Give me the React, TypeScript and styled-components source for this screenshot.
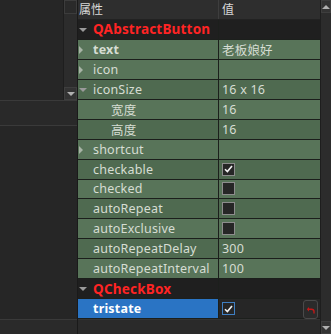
import styled, { createGlobalStyle } from 'styled-components';

const GlobalStyle = createGlobalStyle`
  html, body { margin: 0; padding: 0; background: #262626; }
  body { font-family: 'Noto Sans', 'Noto Sans CJK SC', sans-serif; font-size: 12px; }
`;

const Window = styled.div`
  width: 331px;
  height: 334px;
  display: flex;
  overflow: hidden;
  background: #262626;
`;

const LeftPane = styled.div`
  width: 77px;
  display: flex;
  flex-direction: column;
  border-right: 1px solid #1a1a1a;
`;

const TopList = styled.div`
  height: 100px;
  display: flex;
  border-bottom: 1px solid #3a3a3a;
`;

const ListBody = styled.div`
  flex: 1;
  background: #262626;
`;

const VScroll = styled.div<{ $w?: number }>`
  width: ${p => p.$w ?? 13}px;
  display: flex;
  flex-direction: column;
  justify-content: space-between;
  background: #2c2c2c;
  border-left: 1px solid #1e1e1e;
`;

const Thumb = styled.div`
  height: 14px;
  border: 1px solid #3c3c3c;
  background: #2a2a2a;
  box-sizing: border-box;
`;

const ArrowBtn = styled.div<{ $up?: boolean }>`
  height: 13px;
  display: flex;
  align-items: center;
  justify-content: center;
  background: #333;
  border: 1px solid #3e3e3e;
  box-sizing: border-box;
  &::after {
    content: '';
    border-left: 4px solid transparent;
    border-right: 4px solid transparent;
    ${p => (p.$up ? 'border-bottom: 4px solid #b0b0b0;' : 'border-top: 4px solid #b0b0b0;')}
  }
`;

const MidBar = styled.div`
  height: 24px;
  background: #292929;
  border-bottom: 1px solid #3a3a3a;
`;

const LowerList = styled.div`
  flex: 1;
  background: #262626;
  border-bottom: 1px solid #3a3a3a;
`;

const BottomStrip = styled.div`
  height: 14px;
  background: #2a2a2a;
`;

const PropPane = styled.div`
  flex: 1;
  display: flex;
  flex-direction: column;
  background: #262626;
`;

const Row = styled.div<{ $bg: string }>`
  height: 20px;
  box-sizing: border-box;
  display: grid;
  grid-template-columns: 141px 1fr;
  background: ${p => p.$bg};
  border-bottom: 1px solid #1c1f1c;
`;

const HeaderRow = styled(Row)`
  border-bottom: 1px solid #222;
`;

const NameCell = styled.div<{ $indent?: number; $bold?: boolean; $group?: boolean; $color?: string; $bg?: string }>`
  display: flex;
  align-items: center;
  overflow: hidden;
  white-space: nowrap;
  padding-left: ${p => p.$indent ?? 15}px;
  position: relative;
  border-right: 1px solid #1c1f1c;
  color: ${p => p.$color ?? '#d6ddd3'};
  font-weight: ${p => (p.$bold ? 700 : 400)};
  background: ${p => p.$bg ?? 'transparent'};
  font-size: ${p => (p.$group ? 13.5 : 12.5)}px;
  letter-spacing: 0.2px;
`;

const HeaderName = styled.div`
  display: flex;
  align-items: center;
  overflow: hidden;
  padding-left: 1px;
  border-right: 1px solid #3e3e3e;
  color: #d8d8d8;
`;

const HeaderValue = styled.div`
  display: flex;
  align-items: center;
  padding-left: 3px;
  color: #d8d8d8;
`;

const ValueCell = styled.div<{ $bg?: string }>`
  display: flex;
  align-items: center;
  padding-left: 3px;
  color: #d6ddd3;
  position: relative;
  background: ${p => p.$bg ?? 'transparent'};
  font-size: 12.5px;
  letter-spacing: 0.2px;
`;

const Caret = styled.span<{ $open?: boolean }>`
  position: absolute;
  left: 1px;
  top: 6px;
  width: 0;
  height: 0;
  ${p =>
    p.$open
      ? 'border-left: 4px solid transparent; border-right: 4px solid transparent; border-top: 4px solid #9a9a9a; top: 8px;'
      : 'border-top: 4px solid transparent; border-bottom: 4px solid transparent; border-left: 4px solid #a8b4a6;'}
`;

const Check = styled.div<{ $focus?: boolean }>`
  width: 13px;
  height: 13px;
  box-sizing: border-box;
  border: 1px solid ${p => (p.$focus ? '#3f7fc2' : '#8c8c8c')};
  background: #262626;
  display: flex;
  align-items: center;
  justify-content: center;
`;

const ResetBtn = styled.div`
  position: absolute;
  right: 2px;
  top: 1px;
  width: 13px;
  height: 17px;
  border: 1px solid #4a4a4a;
  border-radius: 3px;
  background: #2b2b2b;
  display: flex;
  align-items: center;
  justify-content: center;
`;

const Filler = styled.div`
  flex: 1;
  background: #262626;
`;

const HScroll = styled.div`
  height: 14px;
  background: #2a2a2a;
  border-top: 1px solid #333;
`;

const GREEN_L = '#587459';
const GREEN_D = '#4f6a50';
const GROUP = '#1f1f1f';
const RED = '#ff2424';

const Tick = () => (
  <svg width="9" height="8" viewBox="0 0 9 8">
    <path d="M1 4.2 L3.4 6.6 L8 1" fill="none" stroke="#f2f2f2" strokeWidth="1.6" />
  </svg>
);

type Prop = {
  name: string;
  value?: string;
  check?: boolean | 'off';
  caret?: 'closed' | 'open';
  bold?: boolean;
  indent?: number;
  bg: string;
};

const props: Prop[] = [
  { name: 'text', value: '老板娘好', caret: 'closed', bold: true, bg: GREEN_L },
  { name: 'icon', caret: 'closed', bg: GREEN_L },
  { name: 'iconSize', value: '16 x 16', caret: 'open', bg: GREEN_D },
  { name: '宽度', value: '16', indent: 33, bg: GREEN_L },
  { name: '高度', value: '16', indent: 33, bg: GREEN_D },
  { name: 'shortcut', caret: 'closed', bg: GREEN_L },
  { name: 'checkable', check: true, bg: GREEN_D },
  { name: 'checked', check: 'off', bg: GREEN_L },
  { name: 'autoRepeat', check: 'off', bg: GREEN_D },
  { name: 'autoExclusive', check: 'off', bg: GREEN_L },
  { name: 'autoRepeatDelay', value: '300', bg: GREEN_D },
  { name: 'autoRepeatInterval', value: '100', bg: GREEN_L },
];

export default function App() {
  return (
    <Window>
      <GlobalStyle />
      <LeftPane>
        <TopList>
          <ListBody />
          <VScroll>
            <Thumb />
            <ArrowBtn />
          </VScroll>
        </TopList>
        <MidBar />
        <LowerList />
        <BottomStrip />
      </LeftPane>

      <PropPane>
        <HeaderRow $bg="#2e2e2e">
          <HeaderName>属性</HeaderName>
          <HeaderValue>值</HeaderValue>
        </HeaderRow>

        <Row $bg={GROUP}>
          <NameCell $bold $group $color={RED}>
            <Caret $open />
            QAbstractButton
          </NameCell>
          <ValueCell />
        </Row>

        {props.map(p => (
          <Row key={p.name} $bg={p.bg}>
            <NameCell $indent={p.indent} $bold={p.bold}>
              {p.caret && <Caret $open={p.caret === 'open'} />}
              {p.name}
            </NameCell>
            <ValueCell>
              {p.value}
              {p.check && <Check>{p.check === true && <Tick />}</Check>}
            </ValueCell>
          </Row>
        ))}

        <Row $bg={GROUP}>
          <NameCell $bold $group $color={RED}>
            <Caret $open />
            QCheckBox
          </NameCell>
          <ValueCell />
        </Row>

        <Row $bg="#262626">
          <NameCell $bold $color="#ffffff" $bg="#2a74c4">tristate</NameCell>
          <ValueCell>
            <Check $focus><Tick /></Check>
            <ResetBtn>
              <svg width="9" height="8" viewBox="0 0 9 8">
                <path d="M3 1 L0.8 3.2 L3 5.4 Z" fill="#c21818" />
                <path d="M2 3.2 H5.5 Q8 3.2 8 5.5 V7.5" fill="none" stroke="#c21818" strokeWidth="1.4" />
              </svg>
            </ResetBtn>
          </ValueCell>
        </Row>

        <Filler />
        <HScroll />
      </PropPane>

      <VScroll $w={10}>
        <ArrowBtn $up />
        <ArrowBtn />
      </VScroll>
    </Window>
  );
}
